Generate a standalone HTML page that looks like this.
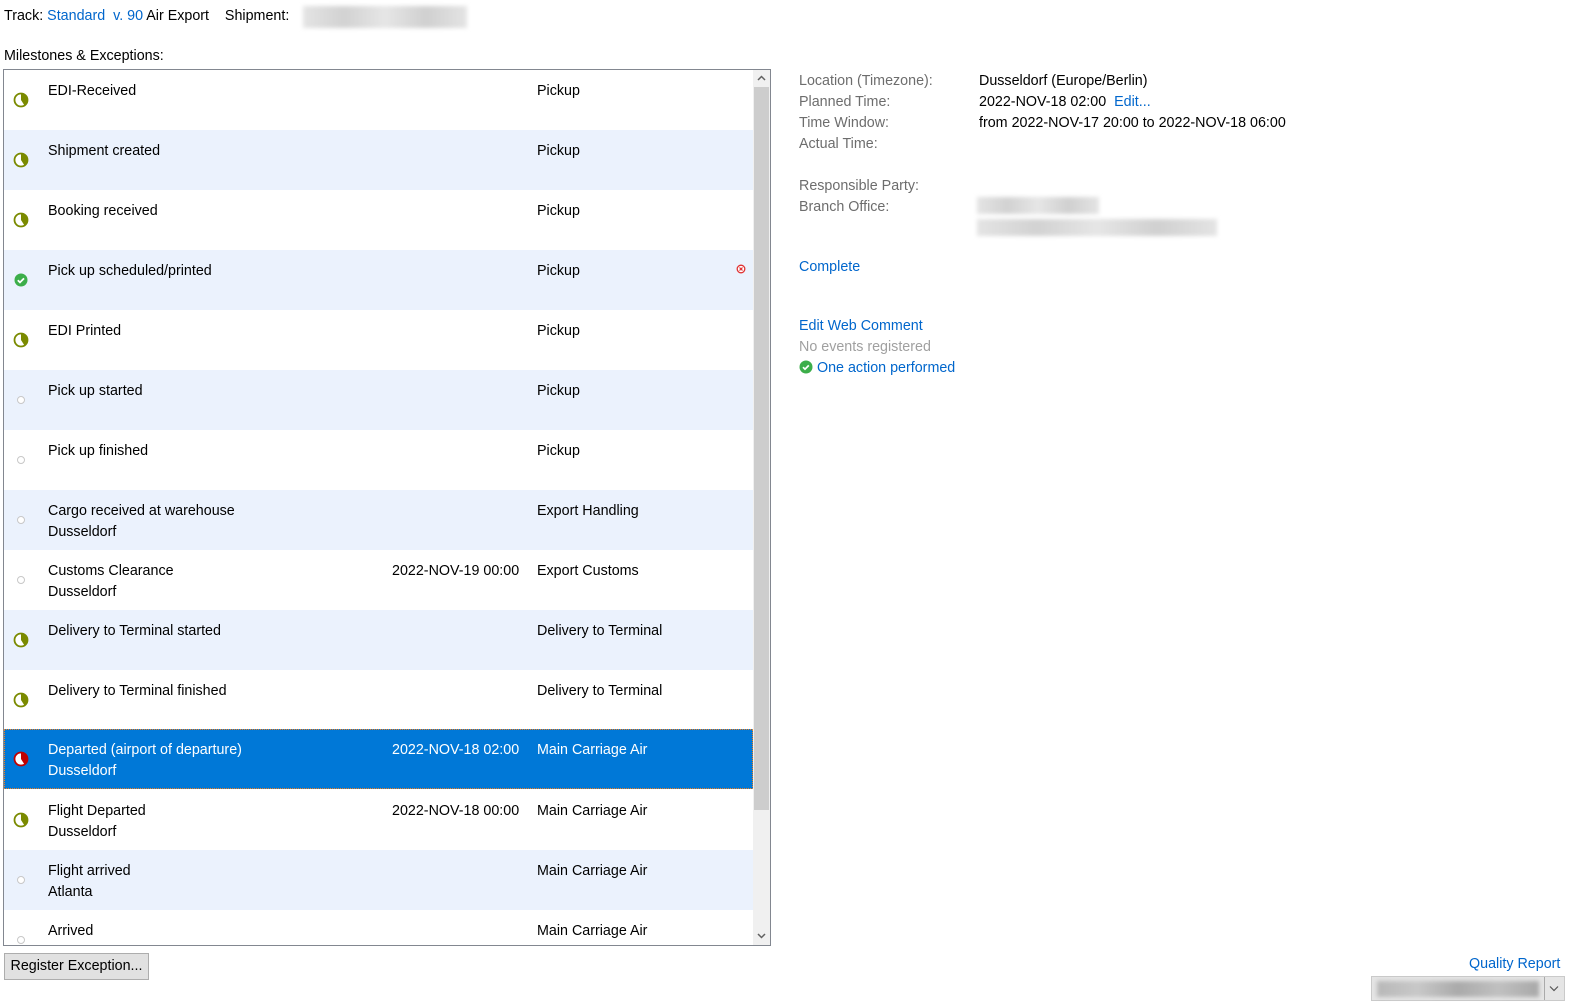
<!DOCTYPE html>
<html><head><style>
body{margin:0;width:1572px;height:1007px;background:#fff;font-family:"Liberation Sans",sans-serif;font-size:14.3px;color:#000;position:relative;overflow:hidden}
.a{position:absolute;white-space:nowrap}
.l{color:#0066cc}
.g{color:#6d6d6d}
.blur{position:absolute;background:linear-gradient(90deg,#e4e4e4,#d2d2d2,#e6e6e6,#d0d0d0,#e4e4e4);filter:blur(2px)}
#box{position:absolute;left:3px;top:69px;width:766px;height:875px;border:1px solid #828790;overflow:hidden}
.row{position:absolute;left:0;width:749px;height:60px}
.row.alt{background:#ebf2fd}
.row.sel{background:#0078d7;color:#fff;outline:1px dotted #f08020;outline-offset:-1px}
.row span{position:absolute;top:11px;line-height:21px}
.ic{position:absolute;left:9px;top:22px}
#sb{position:absolute;left:749px;top:0;width:17px;height:875px;background:#f0f0f0}
#th{position:absolute;left:1px;top:17px;width:15px;height:723px;background:#cdcdcd}
</style></head><body>
<div class="a" style="left:4px;top:8px">Track: <span class="l">Standard</span>&nbsp; <span class="l">v. 90</span> Air Export &nbsp;&nbsp; Shipment:</div>
<div class="blur" style="left:303px;top:6px;width:164px;height:22px"></div>
<div class="a" style="left:4px;top:48px">Milestones &amp; Exceptions:</div>
<div id="box">
<svg width="0" height="0" style="position:absolute"><defs>
<g id="pie"><circle cx="8" cy="8" r="6.5" fill="#fff" stroke="#7a8a00" stroke-width="1.8"/><path d="M8 8V1.5A6.5 6.5 0 0 1 11.5 13.5Z" fill="#7a8a00"/></g>
<g id="red"><circle cx="8" cy="8" r="6.5" fill="#fff" stroke="#c00000" stroke-width="1.8"/><path d="M8 8V1.5A6.5 6.5 0 0 1 11.5 13.5Z" fill="#c00000"/></g>
<g id="emp"><circle cx="8" cy="8" r="3.5" fill="#fff" stroke="#c8c8c8" stroke-width="1"/></g>
<g id="ok"><circle cx="8" cy="8" r="6.5" fill="#3cae4a"/><path d="M4.8 8.2l2.2 2.2 4-4" fill="none" stroke="#fff" stroke-width="1.8"/></g>
</defs></svg>
<div class="row" style="top:0"><svg class="ic" width="16" height="16"><use href="#pie"/></svg><span style="left:44px">EDI-Received</span><span style="left:533px">Pickup</span></div>
<div class="row alt" style="top:60px"><svg class="ic" width="16" height="16"><use href="#pie"/></svg><span style="left:44px">Shipment created</span><span style="left:533px">Pickup</span></div>
<div class="row" style="top:120px"><svg class="ic" width="16" height="16"><use href="#pie"/></svg><span style="left:44px">Booking received</span><span style="left:533px">Pickup</span></div>
<div class="row alt" style="top:180px"><svg class="ic" width="16" height="16"><use href="#ok"/></svg><span style="left:44px">Pick up scheduled/printed</span><span style="left:533px">Pickup</span><svg style="position:absolute;left:732px;top:14px" width="10" height="10"><circle cx="5" cy="5" r="3.8" fill="#fff" stroke="#e03030" stroke-width="1.3"/><path d="M3.5 3.5l3 3M6.5 3.5l-3 3" stroke="#e03030" stroke-width="1.2"/></svg></div>
<div class="row" style="top:240px"><svg class="ic" width="16" height="16"><use href="#pie"/></svg><span style="left:44px">EDI Printed</span><span style="left:533px">Pickup</span></div>
<div class="row alt" style="top:300px"><svg class="ic" width="16" height="16"><use href="#emp"/></svg><span style="left:44px">Pick up started</span><span style="left:533px">Pickup</span></div>
<div class="row" style="top:360px"><svg class="ic" width="16" height="16"><use href="#emp"/></svg><span style="left:44px">Pick up finished</span><span style="left:533px">Pickup</span></div>
<div class="row alt" style="top:420px"><svg class="ic" width="16" height="16"><use href="#emp"/></svg><span style="left:44px">Cargo received at warehouse<br>Dusseldorf</span><span style="left:533px">Export Handling</span></div>
<div class="row" style="top:480px"><svg class="ic" width="16" height="16"><use href="#emp"/></svg><span style="left:44px">Customs Clearance<br>Dusseldorf</span><span style="left:388px">2022-NOV-19 00:00</span><span style="left:533px">Export Customs</span></div>
<div class="row alt" style="top:540px"><svg class="ic" width="16" height="16"><use href="#pie"/></svg><span style="left:44px">Delivery to Terminal started</span><span style="left:533px">Delivery to Terminal</span></div>
<div class="row" style="top:600px"><svg class="ic" width="16" height="16"><use href="#pie"/></svg><span style="left:44px">Delivery to Terminal finished</span><span style="left:533px">Delivery to Terminal</span></div>
<div class="row sel" style="top:659px;height:60px"><svg class="ic" width="16" height="16"><use href="#red"/></svg><span style="left:44px">Departed (airport of departure)<br>Dusseldorf</span><span style="left:388px">2022-NOV-18 02:00</span><span style="left:533px">Main Carriage Air</span></div>
<div class="row" style="top:720px"><svg class="ic" width="16" height="16"><use href="#pie"/></svg><span style="left:44px">Flight Departed<br>Dusseldorf</span><span style="left:388px">2022-NOV-18 00:00</span><span style="left:533px">Main Carriage Air</span></div>
<div class="row alt" style="top:780px"><svg class="ic" width="16" height="16"><use href="#emp"/></svg><span style="left:44px">Flight arrived<br>Atlanta</span><span style="left:533px">Main Carriage Air</span></div>
<div class="row" style="top:840px"><svg class="ic" width="16" height="16"><use href="#emp"/></svg><span style="left:44px">Arrived<br>Atlanta</span><span style="left:533px">Main Carriage Air</span></div>
<div id="sb"><div id="th"></div>
<svg style="position:absolute;left:4px;top:4px" width="9" height="8"><path d="M1 6l3.5-3.5L8 6" fill="none" stroke="#606060" stroke-width="1.5"/></svg>
<svg style="position:absolute;left:4px;top:862px" width="9" height="8"><path d="M1 2l3.5 3.5L8 2" fill="none" stroke="#606060" stroke-width="1.5"/></svg>
</div>
</div>
<div class="a" style="left:4px;top:953px;width:143px;height:25px;border:1px solid #adadad;background:#e1e1e1;line-height:25px;text-align:center">Register Exception...</div>

<div class="a g" style="left:799px;top:71px;line-height:21px">Location (Timezone):<br>Planned Time:<br>Time Window:<br>Actual Time:<br><br>Responsible Party:<br>Branch Office:</div>
<div class="a" style="left:979px;top:71px;line-height:21px">Dusseldorf (Europe/Berlin)<br>2022-NOV-18 02:00 &nbsp;<span class="l">Edit...</span><br>from 2022-NOV-17 20:00 to 2022-NOV-18 06:00</div>
<div class="blur" style="left:977px;top:197px;width:122px;height:17px"></div>
<div class="blur" style="left:977px;top:219px;width:240px;height:17px"></div>
<div class="a l" style="left:799px;top:259px">Complete</div>
<div class="a l" style="left:799px;top:318px">Edit Web Comment</div>
<div class="a" style="left:799px;top:339px;color:#a0a0a0">No events registered</div>
<div class="a l" style="left:799px;top:360px"><svg width="14" height="14" style="vertical-align:-2px"><circle cx="7" cy="7" r="6.5" fill="#3cae4a"/><path d="M4 7.2l2 2 3.8-3.8" fill="none" stroke="#fff" stroke-width="1.7"/></svg> One action performed</div>
<div class="a l" style="left:1469px;top:956px">Quality Report</div>
<div class="a" style="left:1371px;top:976px;width:192px;height:23px;border:1px solid #cacaca;background:#e5e5e5">
<div class="blur" style="left:5px;top:4px;width:162px;height:16px;background:linear-gradient(90deg,#b8b8b8,#c8c8c8,#aaa,#c0c0c0,#a8a8a8)"></div>
<div style="position:absolute;left:172px;top:0;width:1px;height:23px;background:#aaa"></div>
<svg style="position:absolute;left:177px;top:8px" width="10" height="7"><path d="M1 1.5l4 4 4-4" fill="none" stroke="#555" stroke-width="1.2"/></svg>
</div>
</body></html>
